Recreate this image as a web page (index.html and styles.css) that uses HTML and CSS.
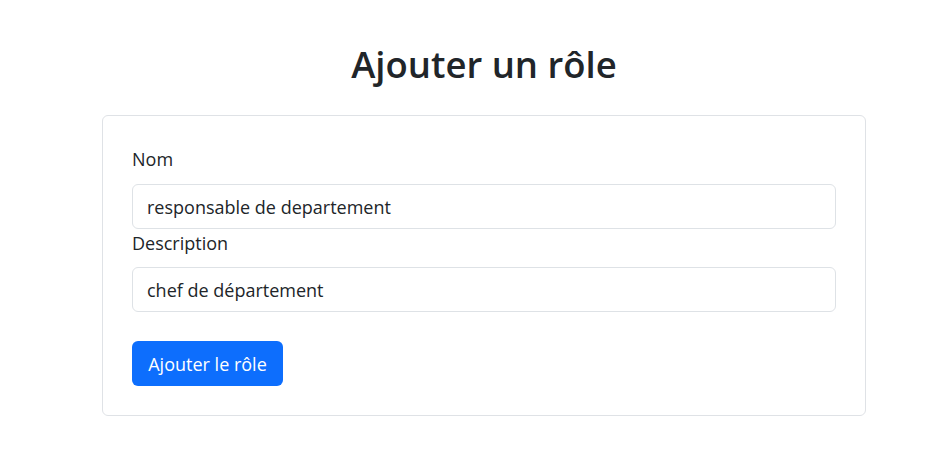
FILE: index.html
```html
<!DOCTYPE html>
<html lang="fr">
<head>
<meta charset="utf-8">
<title>Ajouter un rôle</title>
<link rel="stylesheet" href="styles.css">
</head>
<body>
<main class="container">
  <h1 class="title">Ajouter un rôle</h1>
  <div class="card">
    <form class="form">
      <label class="label" for="nom">Nom</label>
      <input class="control" id="nom" type="text" value="responsable de departement">
      <label class="label" for="desc">Description</label>
      <input class="control" id="desc" type="text" value="chef de département">
      <button class="btn" type="button">Ajouter le rôle</button>
    </form>
  </div>
</main>
</body>
</html>
```

FILE: styles.css
```css
* { box-sizing: border-box; }
html, body { margin: 0; padding: 0; background: #fff; }
body {
  font-family: "Open Sans", "Noto Sans", "Liberation Sans", sans-serif;
  color: #212529;
  font-size: 18px;
}
.container {
  width: 764px;
  margin-left: 102px;
  padding-top: 41px;
}
.title {
  margin: 0 0 28px 0;
  text-align: center;
  font-size: 36.5px;
  line-height: 46px;
  font-weight: 600;
}
.card {
  border: 1px solid #dfe2e6;
  border-radius: 6px;
  padding: 29px;
  height: 301px;
}
.form { display: flex; flex-direction: column; align-items: flex-start; }
.label {
  display: block;
  line-height: 29px;
  margin-bottom: 9px;
}
.label:first-child { margin-bottom: 10px; }
.control {
  width: 100%;
  height: 45px;
  border: 1px solid #dee2e6;
  border-radius: 6px;
  padding: 0 14px;
  font: inherit;
  color: #212529;
  line-height: 28px;
  background: #fff;
}
.btn {
  margin-top: 29px;
  height: 45px;
  width: 151px;
  padding: 0;
  border: 0;
  border-radius: 6px;
  background: #0d6efd;
  color: #fff;
  font: inherit;
}
```
